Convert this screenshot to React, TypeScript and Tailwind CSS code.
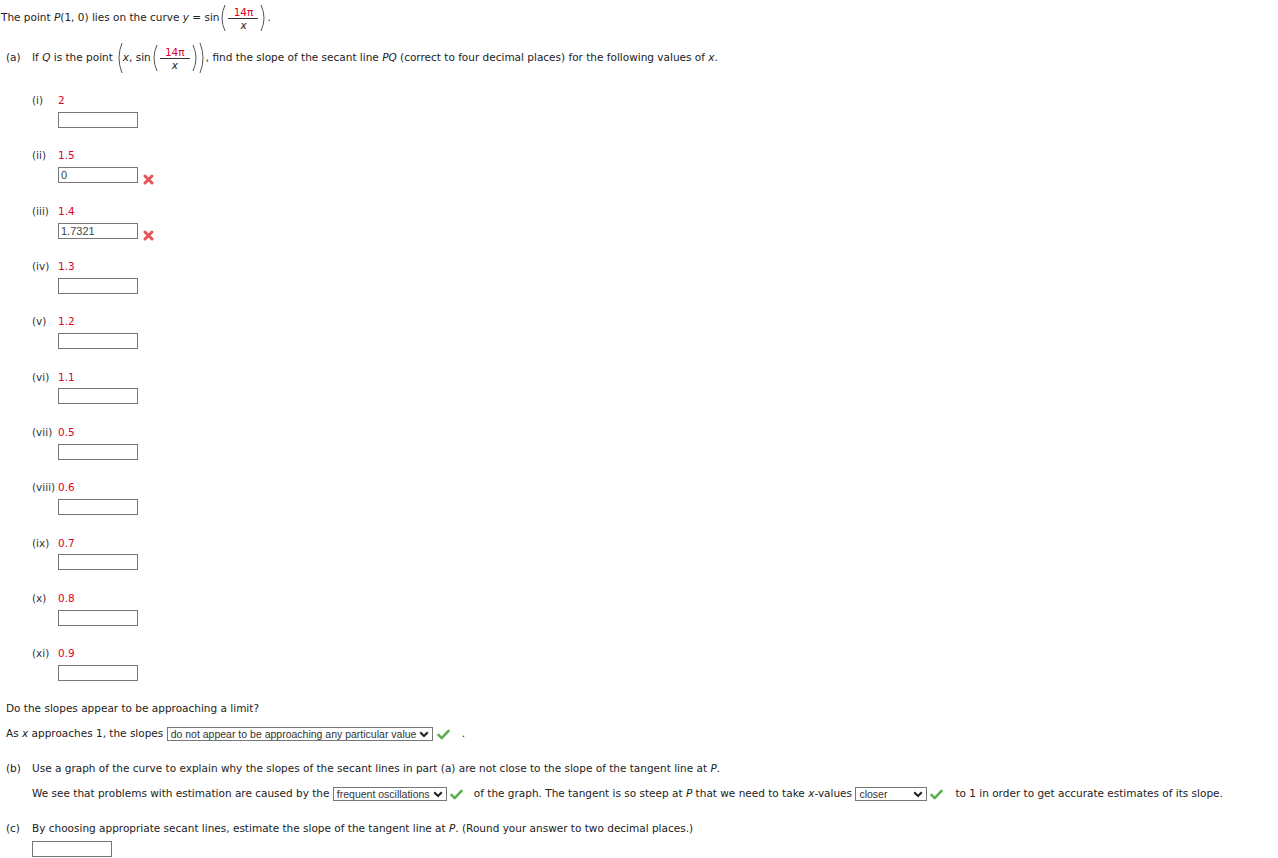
import React from "react";

const font = { fontFamily: '"DejaVu Sans", Verdana, sans-serif' };

const items = [
  { label: "(i)", value: "2", answer: "", wrong: false },
  { label: "(ii)", value: "1.5", answer: "0", wrong: true },
  { label: "(iii)", value: "1.4", answer: "1.7321", wrong: true },
  { label: "(iv)", value: "1.3", answer: "", wrong: false },
  { label: "(v)", value: "1.2", answer: "", wrong: false },
  { label: "(vi)", value: "1.1", answer: "", wrong: false },
  { label: "(vii)", value: "0.5", answer: "", wrong: false },
  { label: "(viii)", value: "0.6", answer: "", wrong: false },
  { label: "(ix)", value: "0.7", answer: "", wrong: false },
  { label: "(x)", value: "0.8", answer: "", wrong: false },
  { label: "(xi)", value: "0.9", answer: "", wrong: false },
];

function Paren({ side, h = 28 }: { side: "l" | "r"; h?: number }) {
  const d = side === "l" ? `M6 1 Q0 ${h / 2} 6 ${h - 1}` : `M1 1 Q7 ${h / 2} 1 ${h - 1}`;
  return (
    <svg width="7" height={h} viewBox={`0 0 7 ${h}`} className="shrink-0">
      <path d={d} fill="none" stroke="#555" strokeWidth="1" />
    </svg>
  );
}

function Frac() {
  return (
    <span className="inline-flex flex-col items-center mx-[2px] text-[10.5px] leading-[12px]">
      <span className="text-[#e0002a] px-[2px]">14π</span>
      <span className="h-px w-[30px] bg-[#333]" />
      <span className="italic">x</span>
    </span>
  );
}

function Check() {
  return (
    <svg width="13" height="11" viewBox="0 0 14 12" className="shrink-0">
      <path d="M1.5 6.5 L5 10 L12.5 2" fill="none" stroke="#5cae4f" strokeWidth="2.8" strokeLinecap="round" strokeLinejoin="round" />
    </svg>
  );
}

function Cross() {
  return (
    <svg width="11" height="11" viewBox="0 0 11 11" className="shrink-0">
      <path d="M2 2 L9 9 M9 2 L2 9" stroke="#e8545c" strokeWidth="3" strokeLinecap="round" />
    </svg>
  );
}

function Select({ text, w }: { text: string; w: number }) {
  return (
    <span
      className="inline-flex items-center justify-between h-[14px] border border-[#777] bg-white pl-[3px] pr-[3px] text-[10.5px] leading-[12px] text-[#333] whitespace-nowrap overflow-hidden shrink-0"
      style={{ width: w, fontFamily: '"Liberation Sans", Arial, sans-serif' }}
    >
      <span>{text}</span>
      <svg width="10" height="7" viewBox="0 0 10 7" className="shrink-0">
        <path d="M1.2 1.2 L5 5 L8.8 1.2" fill="none" stroke="#222" strokeWidth="2" />
      </svg>
    </span>
  );
}

function Box({ value = "" }: { value?: string }) {
  return (
    <div
      className="w-[80px] h-[16px] border border-[#777] bg-white px-[2px] text-[11px] leading-[14px] text-[#444]"
      style={{ fontFamily: '"Liberation Sans", Arial, sans-serif' }}
    >
      {value}
    </div>
  );
}

export default function App() {
  return (
    <div className="bg-white text-[#222] text-[10.5px] w-[1278px] min-h-[858px] pt-[1px]" style={font}>
      {/* intro */}
      <div className="h-[34px] flex items-center pl-[1px]">
        <span>
          The point <i>P</i>(1, 0) lies on the curve <i>y</i> = sin
        </span>
        <Paren side="l" />
        <Frac />
        <Paren side="r" />
        <span>.</span>
      </div>

      {/* part a */}
      <div className="mt-[6px] h-[34px] flex items-center">
        <span className="w-[32px] pl-[6px] shrink-0">(a)</span>
        <span>
          If <i>Q</i> is the point
        </span>
        <span className="ml-[3px]">
          <Paren side="l" h={32} />
        </span>
        <span className="flex items-center">
          <i>x</i>, sin
          <Paren side="l" />
          <Frac />
          <Paren side="r" />
          <Paren side="r" h={32} />
        </span>
        <span>
          , find the slope of the secant line <i>PQ</i> (correct to four decimal places) for the following values of <i>x</i>.
        </span>
      </div>

      <div className="pl-[32px] mt-[19px]">
        {items.map((it) => (
          <div key={it.label} className="h-[35px] mb-[20.3px]">
            <div className="flex h-[14px] items-center">
              <span className="w-[26px] text-[#333]">{it.label}</span>
              <span className="text-[#e0002a]">{it.value}</span>
            </div>
            <div className="flex items-end gap-[5px] mt-[4px] ml-[26px]">
              <Box value={it.answer} />
              {it.wrong && (
                <span className="mb-[-2px]">
                  <Cross />
                </span>
              )}
            </div>
          </div>
        ))}
      </div>

      <div className="pl-[6px] mt-[4px]">
        <div className="h-[14px] flex items-center">Do the slopes appear to be approaching a limit?</div>
        <div className="h-[14px] mt-[11px] flex items-center">
          <span>
            As <i>x</i> approaches 1, the slopes&nbsp;
          </span>
          <Select text="do not appear to be approaching any particular value" w={266} />
          <span className="ml-[4px]">
            <Check />
          </span>
          <span className="ml-[12px]">.</span>
        </div>
      </div>

      {/* part b */}
      <div className="mt-[21px] h-[14px] flex items-center">
        <span className="w-[32px] pl-[6px] shrink-0">(b)</span>
        <span>
          Use a graph of the curve to explain why the slopes of the secant lines in part (a) are not close to the slope of the tangent line at <i>P</i>.
        </span>
      </div>
      <div className="mt-[11px] h-[14px] flex items-center pl-[32px]">
        <span>We see that problems with estimation are caused by the&nbsp;</span>
        <Select text="frequent oscillations" w={114} />
        <span className="ml-[3px]">
          <Check />
        </span>
        <span className="ml-[11px]">
          of the graph. The tangent is so steep at <i>P</i> that we need to take <i>x</i>-values&nbsp;
        </span>
        <Select text="closer" w={72} />
        <span className="ml-[3px]">
          <Check />
        </span>
        <span className="ml-[12px]">to 1 in order to get accurate estimates of its slope.</span>
      </div>

      {/* part c */}
      <div className="mt-[21px] h-[14px] flex items-center">
        <span className="w-[32px] pl-[6px] shrink-0">(c)</span>
        <span>
          By choosing appropriate secant lines, estimate the slope of the tangent line at <i>P</i>. (Round your answer to two decimal places.)
        </span>
      </div>
      <div className="pl-[32px] mt-[5px]">
        <Box />
      </div>
    </div>
  );
}
